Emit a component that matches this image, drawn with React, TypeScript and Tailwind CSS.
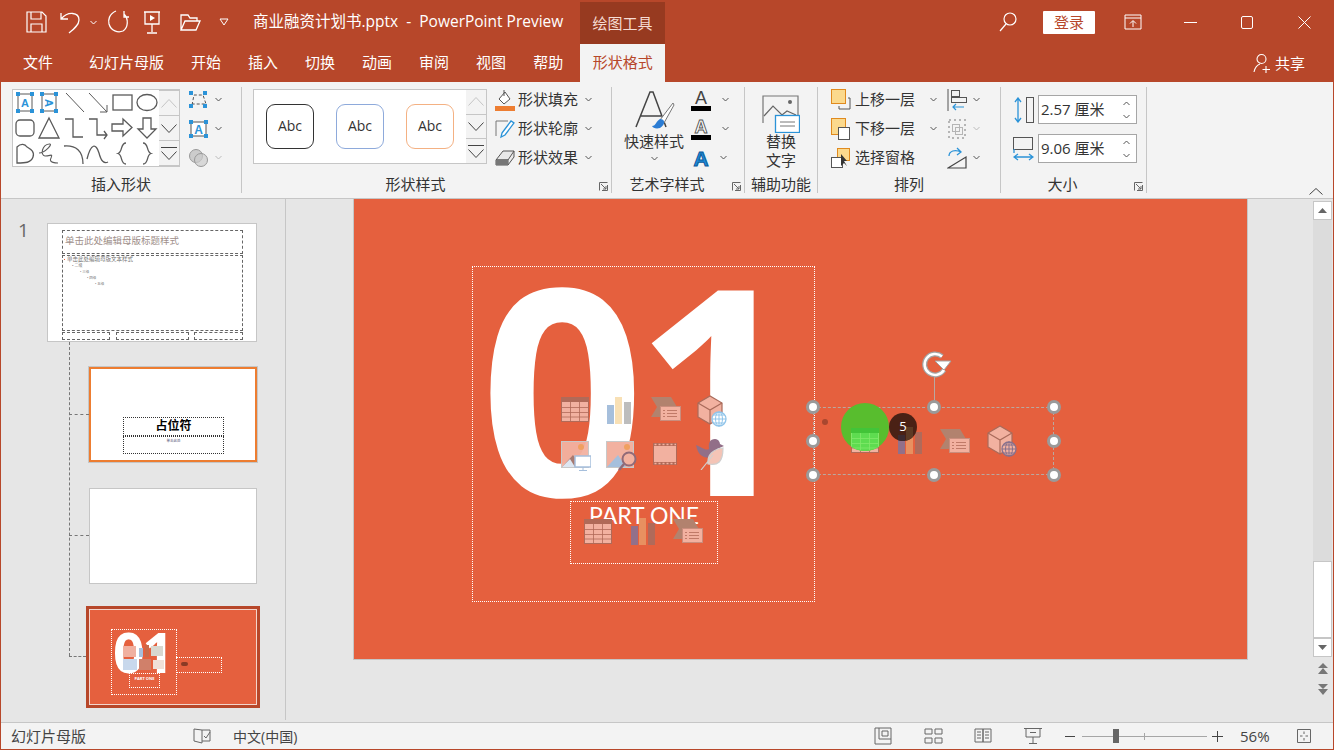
import React from "react";

const CJK = '"Open Sans","Noto Sans CJK SC",sans-serif';
const G = "#5a5a5a";
const B = "#2b93d8";

function Chev({ c = "#555", className = "" }: { c?: string; className?: string }) {
  return (
    <svg width="7" height="5" viewBox="0 0 7 5" className={className}>
      <path d="M.5 1 3.5 4 6.5 1" fill="none" stroke={c} strokeWidth="1" />
    </svg>
  );
}

function Launcher() {
  return (
    <svg width="9" height="9" viewBox="0 0 9 9" className="absolute right-[3px] bottom-[2px]">
      <path d="M.5 8.5V.5H8.5M8.5 3V8.5H3M2 2 7 7M4 7H7V4" fill="none" stroke="#666" strokeWidth="1" />
    </svg>
  );
}

function Group({ w, label, labelCls = "", launcher = false, children }: { w: string; label: string; labelCls?: string; launcher?: boolean; children: React.ReactNode }) {
  return (
    <div className={`relative flex h-[106px] shrink-0 flex-col border-r border-[#c6c6c6] ${w}`}>
      <div className="flex h-[84px] min-h-0">{children}</div>
      <div className={`mt-[8px] text-center text-[15px] leading-[18px] whitespace-nowrap text-[#333] ${labelCls}`}>{label}</div>
      {launcher && <Launcher />}
    </div>
  );
}

function Scroller() {
  const cls = "flex flex-1 items-center justify-center border-[#c6c6c6]";
  return (
    <div className="flex h-full w-[21px] flex-col border border-l-0 border-[#c6c6c6] bg-[#f3f3f3]">
      <div className={cls}>
        <svg width="16" height="9" viewBox="0 0 16 9"><path d="M.5 8.5 8 .5 15.500 8.500" fill="none" stroke="#c4c4c4" /></svg>
      </div>
      <div className={`${cls} border-t`}>
        <svg width="16" height="9" viewBox="0 0 16 9"><path d="M.5.5 8 8.500 15.500.5" fill="none" stroke="#444" /></svg>
      </div>
      <div className={`${cls} flex-col gap-[3px] border-t`}>
        <div className="h-[1px] w-[16px] bg-[#444]" />
        <svg width="16" height="9" viewBox="0 0 16 9"><path d="M.5.5 8 8.500 15.500.5" fill="none" stroke="#444" /></svg>
      </div>
    </div>
  );
}

const shapePaths: React.ReactNode[] = [
  <g key="a"><rect x="5" y="4" width="14" height="17" fill="none" stroke={G} /><text x="12" y="17" fontSize="11" fontWeight="700" textAnchor="middle" fill={B} fontFamily="Liberation Sans">A</text><path d="M3 2h4v4H3zM17 2h4v4h-4zM3 19h4v4H3zM17 19h4v4h-4z" fill={B} /></g>,
  <g key="b"><rect x="5" y="4" width="14" height="17" fill="none" stroke={G} /><text x="12" y="17" fontSize="11" fontWeight="700" textAnchor="middle" fill={B} fontFamily="Liberation Sans" transform="rotate(90 12 13)">A</text><path d="M3 2h4v4H3zM17 2h4v4h-4zM3 19h4v4H3zM17 19h4v4h-4z" fill={B} /></g>,
  <path key="c" d="M4 3 22 22" stroke={G} fill="none" />,
  <path key="d" d="M3 3 21 22M21 15v7h-7" stroke={G} fill="none" />,
  <rect key="e" x="3" y="5" width="19" height="15" fill="none" stroke={G} strokeWidth="1.300" />,
  <ellipse key="f" cx="12" cy="12.500" rx="10" ry="8" fill="none" stroke={G} strokeWidth="1.300" />,
  <rect key="g" x="3" y="5" width="18" height="16" rx="4" fill="none" stroke={G} strokeWidth="1.300" />,
  <path key="h" d="M12 3 22 23H2Z" fill="none" stroke={G} strokeWidth="1.300" />,
  <path key="i" d="M3 4H11V22H21" fill="none" stroke={G} strokeWidth="1.300" />,
  <path key="j" d="M3 4H11V20H21M18 16l3 4-3 4" fill="none" stroke={G} strokeWidth="1.300" />,
  <path key="k" d="M2 9H13V4L22 12.500 13 21V16H2Z" fill="none" stroke={G} strokeWidth="1.300" />,
  <path key="l" d="M8 3H16V14H21L12 23 3 14H8Z" fill="none" stroke={G} strokeWidth="1.300" />,
  <path key="m" d="M4 6C8 2 12 3 14 6 17 8 22 10 20 16 18 22 12 22 4 22Z" fill="none" stroke={G} strokeWidth="1.300" />,
  <path key="n" d="M2 12C8 12 17 2 12 3 5 4 3 14 8 15 14 15 16 12 14 17 11 22 20 22 21 22" fill="none" stroke={G} strokeWidth="1.100" />,
  <path key="o" d="M2 5C14 4 21 10 21 23" fill="none" stroke={G} strokeWidth="1.300" />,
  <path key="p" d="M1 18C5 2 10 2 13 12 15 20 18 23 22 21" fill="none" stroke={G} strokeWidth="1.300" />,
  <path key="q" d="M16 2C10 2 13 11 8 12.500 13 14 10 23 16 23" fill="none" stroke={G} strokeWidth="1.300" />,
  <path key="r" d="M8 2C14 2 11 11 16 12.500 11 14 14 23 8 23" fill="none" stroke={G} strokeWidth="1.300" />,
];

function ShapeGallery() {
  return (
    <div className="ml-[11px] mt-[2px] flex h-[78px] w-[168px] border border-[#c6c6c6] border-r-0 bg-white">
      <div className="grid w-[147px] grid-cols-6 grid-rows-3">
        {shapePaths.map((p, i) => (
          <svg key={i} width="24" height="25" viewBox="0 0 24 25">{p}</svg>
        ))}
      </div>
      <Scroller />
    </div>
  );
}

function Abc({ c }: { c: string }) {
  return (
    <div className={`flex h-[45px] w-[48px] items-center justify-center rounded-[9px] border bg-white pb-[2px] text-[14px] text-[#333] ${c}`}>Abc</div>
  );
}

function LA({ letter = false, outline = false }: { letter?: boolean; outline?: boolean }) {
  return (
    <svg width="22" height="24" viewBox="0 0 22 24">
      {outline ? (
        <text x="11" y="16" fontSize="18" textAnchor="middle" fill="#fff" stroke="#555" strokeWidth=".9" fontFamily="Liberation Sans" fontWeight="700">A</text>
      ) : letter ? (
        <text x="11" y="20" fontSize="21" textAnchor="middle" fill="#1f8bd6" stroke="#0a5a9c" strokeWidth="1" fontFamily="Liberation Sans" fontWeight="700">A</text>
      ) : (
        <text x="11" y="16" fontSize="18" textAnchor="middle" fill="#444" fontFamily="Liberation Sans">A</text>
      )}
      {!letter && <rect x="1" y="18" width="20" height="5" fill="#000" />}
    </svg>
  );
}

function Thumb1() {
  return (
    <div className="relative ml-[46px] h-[119px] w-[210px] border border-[#c6c6c6] bg-white">
      <div className="absolute left-[14px] top-[6px] h-[24px] w-[181px] border border-dashed border-[#666] pl-[2px] text-[9.500px] leading-[20px] whitespace-nowrap text-[#a08f8a]">单击此处编辑母版标题样式</div>
      <div className="absolute left-[14px] top-[31px] h-[76px] w-[181px] border border-dashed border-[#666] text-[#777]">
        <div className="ml-[1px] flex h-[6px] items-center gap-[2px] text-[5.500px] leading-[6px] whitespace-nowrap"><span className="h-[1px] w-[1px] bg-[#e5603e]" />单击此处编辑母版文本样式</div>
        <div className="ml-[9px] mt-[1px] text-[4px] leading-[6px]">• 二级</div>
        <div className="ml-[17px] text-[3.500px] leading-[6px]">• 三级</div>
        <div className="ml-[24px] text-[3.500px] leading-[6px]">• 四级</div>
        <div className="ml-[32px] text-[3.500px] leading-[6px]">• 五级</div>
      </div>
      <div className="absolute left-[14px] top-[108px] h-[8px] w-[48px] border border-dashed border-[#666]" />
      <div className="absolute left-[68px] top-[108px] h-[8px] w-[73px] border border-dashed border-[#666]" />
      <div className="absolute left-[146px] top-[108px] h-[8px] w-[49px] border border-dashed border-[#666]" />
    </div>
  );
}

function Thumb2() {
  return (
    <div className="relative ml-[88px] mt-[25px] h-[95px] w-[168px] border-2 border-[#ed7d31] bg-white outline outline-1 outline-[#c6c6c6]">
      <div className="absolute left-[32px] top-[48px] h-[19px] w-[101px] border border-dotted border-[#333] text-center text-[12px] font-bold leading-[15px] text-black">占位符</div>
      <div className="absolute left-[32px] top-[67px] h-[18px] w-[101px] border border-dotted border-[#333] text-center text-[3.500px] leading-[8px] text-[#557]">单击此处</div>
    </div>
  );
}

function Thumb4() {
  return (
    <div className="relative ml-[85px] mt-[22px] h-[102px] w-[174px] border-[3px] border-[#b7472a] bg-[#e5603e] outline outline-1 -outline-offset-[4px] outline-[#f3d5cc]">
      <div className="absolute left-[22px] top-[20px] h-[66px] w-[66px] border border-dotted border-white" />
      <div className="absolute left-[24px] top-[23px] text-[55px] font-bold leading-[40px] tracking-[-2px] text-white" style={{ fontFamily: "Open Sans" }}>01</div>
      <svg className="absolute left-[32px] top-[36px]" width="44" height="26" viewBox="0 0 44 26">
        <rect x="2" y="1" width="13" height="11" fill="#f0b0a0" /><rect x="18" y="3" width="4" height="9" fill="#a6bfdc" /><rect x="24" y="0" width="4" height="12" fill="#c96a4a" />
        <rect x="30" y="1" width="12" height="10" fill="#d8d8d0" /><rect x="2" y="14" width="14" height="11" fill="#c8d8ec" /><rect x="18" y="14" width="12" height="11" fill="#d0806a" /><rect x="32" y="15" width="11" height="9" fill="#f0e0d8" />
      </svg>
      <div className="absolute left-[40px] top-[64px] h-[15px] w-[31px] border border-dotted border-white text-center text-[4px] font-bold leading-[10px] text-white">PART ONE</div>
      <div className="absolute left-[87px] top-[48px] h-[16px] w-[46px] border border-dotted border-white" />
      <div className="absolute left-[92px] top-[53px] h-[4px] w-[7px] rounded-full bg-[#8a3a25]" />
    </div>
  );
}

function Table({ s = "#b06a58", f = "#f2b1a0", h = "#b06a58" }: { s?: string; f?: string; h?: string }) {
  return (
    <svg width="28" height="25" viewBox="0 0 28 25">
      <rect x=".5" y=".5" width="27" height="24" fill={f} stroke={s} />
      <rect x="0" y="0" width="28" height="5" fill={h} />
      <path d="M9.500 5V24M18.500 5V24M1 10.500H27M1 15.500H27M1 20H27" stroke={s} fill="none" strokeWidth=".8" />
    </svg>
  );
}

function Bars({ a = "#a6bfdc", b = "#f8e0b5", c = "#bdbdbd" }: { a?: string; b?: string; c?: string }) {
  return (
    <svg width="24" height="27" viewBox="0 0 24 27">
      <rect x="0" y="8" width="7" height="19" fill={a} />
      <rect x="8" y="0" width="7" height="27" fill={b} />
      <rect x="17" y="5" width="7" height="22" fill={c} />
    </svg>
  );
}

function Tag() {
  return (
    <svg width="30" height="26" viewBox="0 0 30 26">
      <path d="M0 2H20L26 12H20V22H0L6 12Z" fill="#b2826e" />
      <rect x="9.500" y="11.500" width="20" height="14" fill="#f2b1a0" stroke="#c98d7d" />
      <path d="M12 15.500h2M16 15.500h10M12 18.500h2M16 18.500h10M12 21.500h2M16 21.500h10" stroke="#c07a68" />
    </svg>
  );
}

function Cube({ g = "#8fc4ea", f = "#fff" }: { g?: string; f?: string }) {
  return (
    <svg width="30" height="32" viewBox="0 0 30 32">
      <path d="M1 8 13 1 25 8V22L13 29 1 22Z" fill="#f2b1a0" stroke="#a96a5a" strokeWidth="1.200" />
      <path d="M1 8 13 15 25 8M13 15V29" fill="none" stroke="#a96a5a" strokeWidth="1.200" />
      <circle cx="22" cy="24" r="7" fill={f} stroke={g} strokeWidth="1.300" />
      <path d="M15 24H29M22 17V31M17 20H27M17 28H27" stroke={g} fill="none" />
      <ellipse cx="22" cy="24" rx="3.500" ry="7" stroke={g} fill="none" />
    </svg>
  );
}

function PicMon() {
  return (
    <svg width="30" height="30" viewBox="0 0 30 30">
      <rect x=".5" y=".5" width="27" height="26" fill="#f2b1a0" fillOpacity=".95" stroke="#c8c8c8" />
      <path d="M1 26 12 14 20 26Z" fill="#a87a70" />
      <path d="M1 26 9 18 14 26Z" fill="#dde6f1" />
      <circle cx="20" cy="6" r="3" fill="#f0a060" />
      <rect x="14" y="15" width="16" height="11" fill="#fff" stroke="#a6bfdc" strokeWidth="1.500" />
      <path d="M22 26V29M18 29.500H26" stroke="#a6bfdc" />
    </svg>
  );
}

function PicMag() {
  return (
    <svg width="31" height="31" viewBox="0 0 31 31">
      <rect x=".5" y=".5" width="27" height="26" fill="#f2b1a0" stroke="#c8c8c8" />
      <path d="M1 26 12 14 20 26Z" fill="#a6bfdc" />
      <circle cx="21" cy="6" r="3" fill="#f0a060" />
      <circle cx="23" cy="18" r="6.500" fill="#f2b1a0" stroke="#906a78" strokeWidth="2" />
      <path d="M18 23 13 29" stroke="#906a78" strokeWidth="2.500" />
    </svg>
  );
}

function Film() {
  return (
    <svg width="24" height="22" viewBox="0 0 24 22">
      <rect x="0" y="0" width="24" height="22" fill="#b06a58" />
      <rect x="1" y="3" width="22" height="16" fill="#f2b1a0" />
      <path d="M1.500 1.500H23M1.500 20.500H23" stroke="#f2b1a0" strokeWidth="1.500" strokeDasharray="2 2" />
    </svg>
  );
}

function Bird() {
  return (
    <svg width="29" height="33" viewBox="0 0 29 33">
      <path d="M0 8C6 10 9 14 13 12 12 6 14 2 19 2 23 2 24 6 24 7L28 9 21 12C20 20 14 22 8 20 3 18 1 13 0 8Z" fill="#926f88" />
      <path d="M27 11C27 25 22 29 12 27 11 18 17 12 27 11ZM5 33 17 18" fill="#f4c4b6" stroke="#cfcfcf" strokeWidth="1.200" />
    </svg>
  );
}

function Handle({ cls }: { cls: string }) {
  return <div className={`absolute h-[14px] w-[14px] rounded-full border-[3px] border-[#9a9a9a] bg-white ${cls}`} />;
}

function Slide() {
  return (
    <div className="relative h-[460px] w-[893px] overflow-hidden bg-[#e5603e] outline outline-1 outline-[#c6c6c6]" style={{ fontFamily: CJK }}>
      <div className="absolute left-[118px] top-[67px] h-[336px] w-[343px] border border-dotted border-white" />
      <div className="absolute left-[126px] top-[80px] text-[288px] font-bold leading-[210px] tracking-[-10px] text-white" style={{ fontFamily: "Open Sans" }}>01</div>
      <div className="absolute left-[207px] top-[198px]"><Table /></div>
      <div className="absolute left-[253px] top-[198px]"><Bars /></div>
      <div className="absolute left-[297px] top-[196px]"><Tag /></div>
      <div className="absolute left-[343px] top-[196px]"><Cube /></div>
      <div className="absolute left-[207px] top-[242px]"><PicMon /></div>
      <div className="absolute left-[252px] top-[242px]"><PicMag /></div>
      <div className="absolute left-[299px] top-[244px]"><Film /></div>
      <div className="absolute left-[342px] top-[238px]"><Bird /></div>

      <div className="absolute left-[216px] top-[302px] h-[63px] w-[148px] border border-dotted border-white" />
      <div className="absolute left-[235px] top-[302px] text-[23px] leading-[28px] whitespace-nowrap text-white" style={{ fontFamily: "Lato" }}>PART ONE</div>
      <div className="absolute left-[230px] top-[320px]"><Table /></div>
      <div className="absolute left-[277px] top-[319px]"><Bars a="#92708a" b="#e89060" c="#b06a5a" /></div>
      <div className="absolute left-[319px] top-[318px]"><Tag /></div>

      <div className="absolute left-[459px] top-[208px] h-[68px] w-[241px] border border-dashed border-[#b9a8a0]" />
      <div className="absolute left-[580px] top-[177px] h-[31px] w-[1px] bg-[#b9a8a0]" />
      <svg className="absolute left-[566px] top-[151px]" width="32" height="29" viewBox="0 0 32 29">
        <path d="M24 20A10.500 10.500 0 1 1 22 6.500" fill="none" stroke="#a3a3a3" strokeWidth="5" />
        <path d="M24 20A10.500 10.500 0 1 1 22 6.500" fill="none" stroke="#fff" strokeWidth="2.500" />
        <path d="M15 11H31L24 20Z" fill="#fff" stroke="#a3a3a3" />
      </svg>
      <div className="absolute left-[468px] top-[220px] h-[6px] w-[6px] rounded-full bg-[#a8472f]" />
      <div className="absolute left-[497px] top-[229px]"><Table /></div>
      <div className="absolute left-[544px] top-[228px]"><Bars a="#92708a" b="#e89060" c="#b06a5a" /></div>
      <div className="absolute left-[586px] top-[228px]"><Tag /></div>
      <div className="absolute left-[633px] top-[226px]"><Cube g="#86708c" f="#f2b1a0" /></div>
      <div className="absolute left-[487px] top-[204px] h-[48px] w-[48px] overflow-hidden rounded-full bg-[#58bd2e]">
        <div className="absolute left-[10px] top-[25px]"><Table s="#82e86a" f="#5edc50" h="#42c438" /></div>
      </div>
      <div className="absolute left-[535px] top-[214px] flex h-[28px] w-[28px] items-center justify-center overflow-hidden rounded-full bg-[#4a2115] text-[13px] text-white">
        <div className="absolute left-[9px] top-[14px]"><Bars a="#3c2a30" b="#5c3a24" c="#58301f" /></div>
        <span className="relative">5</span>
      </div>
      <Handle cls="left-[452px] top-[201px]" />
      <Handle cls="left-[573px] top-[201px]" />
      <Handle cls="left-[693px] top-[201px]" />
      <Handle cls="left-[452px] top-[235px]" />
      <Handle cls="left-[693px] top-[235px]" />
      <Handle cls="left-[452px] top-[269px]" />
      <Handle cls="left-[573px] top-[269px]" />
      <Handle cls="left-[693px] top-[269px]" />
    </div>
  );
}

function TitleIcons() {
  const w = "#fff";
  return (
    <div className="flex w-[252px] shrink-0 items-center pl-[25px]">
      <svg width="21" height="22" viewBox="0 0 21 22" fill="none" stroke={w} strokeWidth="1.200"><path d="M1 1H16L20 5V21H1ZM5 1V8H15V1M5 21V13H16V21" /></svg>
      <svg className="ml-[13px]" width="22" height="24" viewBox="0 0 22 24" fill="none" stroke={w} strokeWidth="1.300"><path d="M1 3V9H8M1 9C8 1 19 2 19 10 19 15 14 19 9 23" /></svg>
      <Chev c="#fff" className="ml-[8px]" />
      <svg className="ml-[10px]" width="22" height="24" viewBox="0 0 22 24" fill="none" stroke={w} strokeWidth="1.300"><path d="M9 1C2 4 1 10 2 14 4 21 11 23 16 21 21 18 22 9 17 4M17 1V7H22" /></svg>
      <svg className="ml-[13px]" width="20" height="24" viewBox="0 0 20 24" fill="none" stroke={w} strokeWidth="1.300"><path d="M2 2H18M3 2V14H17V2M10 14V22M5 23H15" /><path d="M8 5V11L13 8Z" fill="#fff" stroke="none" /></svg>
      <svg className="ml-[18px]" width="21" height="18" viewBox="0 0 21 18" fill="none" stroke={w} strokeWidth="1.300"><path d="M1 17V2H8L10 5H17V8M1 17H16L20 8H5Z" /></svg>
      <svg className="ml-[18px]" width="10" height="8" viewBox="0 0 10 8" fill="none" stroke={w}><path d="M1 1H9L5 7Z" /></svg>
    </div>
  );
}

function StatusIcon({ children }: { children: React.ReactNode }) {
  return <svg width="22" height="18" viewBox="0 0 22 18" fill="none" stroke="#666" strokeWidth="1">{children}</svg>;
}

export default function App() {
  const tabs = [
    ["文件", "ml-[22px]"],
    ["幻灯片母版", "ml-[36px]"],
    ["开始", "ml-[27px]"],
    ["插入", "ml-[27px]"],
    ["切换", "ml-[27px]"],
    ["动画", "ml-[27px]"],
    ["审阅", "ml-[27px]"],
    ["视图", "ml-[27px]"],
    ["帮助", "ml-[27px]"],
  ];
  const rowCls = "flex h-[29px] shrink-0 items-center";
  return (
    <div className="flex h-[750px] w-[1334px] flex-col overflow-hidden border-x border-b border-[#b7472a] bg-[#e6e6e6] text-[#333]" style={{ fontFamily: CJK }}>
      {/* title bar */}
      <div className="flex h-[44px] shrink-0 items-center bg-[#b7472a] text-white">
        <TitleIcons />
        <div className="w-[327px] shrink-0 text-[15.500px] whitespace-nowrap">商业融资计划书.pptx&nbsp; -&nbsp; PowerPoint Preview</div>
        <div className="mt-[2px] flex h-[42px] w-[85px] shrink-0 items-center justify-center bg-[#973a20] text-[15px] text-[#f6dcd4]">绘图工具</div>
        <div className="ml-auto flex items-center">
          <svg width="18" height="20" viewBox="0 0 18 20" fill="none" stroke="#fff" strokeWidth="1.200"><circle cx="11" cy="7" r="6" /><path d="M7 12 1 19" /></svg>
          <div className="ml-[26px] flex h-[23px] w-[52px] items-center justify-center rounded-[1px] bg-white text-[15px] text-[#b7472a]">登录</div>
          <svg className="ml-[29px]" width="18" height="16" viewBox="0 0 18 16" fill="none" stroke="#fff"><path d="M1 1H17V15H1ZM1 4H17M9 13V7M6 9.500 9 6.500 12 9.500" /></svg>
          <div className="ml-[42px] h-[1px] w-[13px] bg-white" />
          <div className="ml-[44px] h-[13px] w-[12px] rounded-[2px] border border-white" />
          <svg className="ml-[45px] mr-[22px]" width="13" height="13" viewBox="0 0 13 13" stroke="#fff"><path d="M.5.5 12.500 12.500M12.500.5.5 12.500" /></svg>
        </div>
      </div>
      {/* tabs */}
      <div className="flex h-[38px] shrink-0 items-center bg-[#b7472a] text-[15px] text-white">
        {tabs.map(([t, c]) => (
          <div key={t} className={`${c} pb-[2px]`}>{t}</div>
        ))}
        <div className="ml-[17px] flex h-full w-[85px] items-center justify-center bg-[#f3f3f3] pb-[2px] text-[15px] whitespace-nowrap text-[#b7472a]">形状格式</div>
        <div className="ml-auto mr-[28px] flex items-center gap-[4px] text-[15px]">
          <svg width="18" height="20" viewBox="0 0 18 20" fill="none" stroke="#fff" strokeWidth="1.100"><circle cx="8.500" cy="6" r="4.500" /><path d="M1 19C2 14 4 12 7 11M13 13V20M9.500 16.500H17" /></svg>
          共享
        </div>
      </div>
      {/* ribbon */}
      <div className="relative flex h-[117px] shrink-0 items-start border-b border-[#c6c6c6] bg-[#f3f3f3] pt-[5px]">
        <Group w="w-[241px]" label="插入形状">
          <ShapeGallery />
          <div className="ml-[8px] mt-[-2px] flex flex-col">
            {[0, 1, 2].map((i) => (
              <div key={i} className={`${rowCls} gap-[6px]`}>
                {i === 0 && <svg width="21" height="20" viewBox="0 0 21 20"><path d="M4 15 6 5H15L18 14H4" fill="none" stroke="#555" strokeDasharray="3 2" /><path d="M1 1h4v4H1zM15 1h4v4h-4zM1 14h4v4H1zM15 14h4v4h-4z" fill={B} /></svg>}
                {i === 1 && <svg width="21" height="20" viewBox="0 0 21 20"><rect x="3" y="3" width="15" height="14" fill="#fff" stroke="#555" /><text x="10.500" y="15" fontSize="12" fontWeight="700" fill={B} textAnchor="middle" fontFamily="Liberation Sans">A</text><path d="M1 1h4v4H1zM16 1h4v4h-4zM1 15h4v4H1zM16 15h4v4h-4z" fill={B} /></svg>}
                {i === 2 && <svg width="21" height="20" viewBox="0 0 21 20"><circle cx="8" cy="8" r="6.500" fill="#ccc" stroke="#999" /><circle cx="13" cy="12" r="6.500" fill="#ccc" fillOpacity=".7" stroke="#999" /></svg>}
                <Chev c={i === 2 ? "#bbb" : "#555"} />
              </div>
            ))}
          </div>
        </Group>
        <Group w="w-[370px]" label="形状样式" labelCls="pr-[22px]" launcher>
          <div className="ml-[11px] mt-[2px] flex h-[75px] w-[234px]">
            <div className="flex w-[213px] items-center gap-[22px] border border-r-0 border-[#c6c6c6] bg-white pl-[12px]">
              <Abc c="border-[#333]" />
              <Abc c="border-[#8eaadb]" />
              <Abc c="border-[#f4b183]" />
            </div>
            <Scroller />
          </div>
          <div className="ml-[8px] mt-[-2px] flex flex-col text-[15px] whitespace-nowrap">
            <div className={rowCls}>
              <svg width="20" height="22" viewBox="0 0 20 22"><path d="M4 10 10 3 15 10 9 15Z" fill="#fff" stroke="#555" /><path d="M9 1V7" stroke="#555" /><rect x="0" y="17" width="20" height="5" fill="#ed7d31" /></svg>
              <span className="ml-[3px]">形状填充</span><Chev className="ml-[7px]" />
            </div>
            <div className={rowCls}>
              <svg width="20" height="20" viewBox="0 0 20 20" fill="none"><path d="M1 17V2H13" stroke="#777" /><path d="M7 14 16 2 19 4 10 16 6 18Z" fill="#fff" stroke={B} strokeWidth="1.300" /></svg>
              <span className="ml-[3px]">形状轮廓</span><Chev className="ml-[7px]" />
            </div>
            <div className={rowCls}>
              <svg width="20" height="18" viewBox="0 0 20 18"><path d="M1 11 8 2H19L13 11ZM1 11V16H13V11ZM13 16 19 8V2" fill="#e8e8e8" stroke="#555" /><path d="M1 11H13V16H1Z" fill="#777" /></svg>
              <span className="ml-[3px]">形状效果</span><Chev className="ml-[7px]" />
            </div>
          </div>
        </Group>
        <Group w="w-[133px]" label="艺术字样式" labelCls="pr-[22px]" launcher>
          <div className="ml-[10px] flex w-[64px] flex-col items-center">
            <svg className="mt-[4px]" width="42" height="38" viewBox="0 0 42 38">
              <path d="M3 36 17 1H20L33 36M8 25H28" fill="none" stroke="#444" strokeWidth="1.500" />
              <path d="M40 12 27 29 31 32 41 14Z" fill="#fff" stroke="#777" />
              <path d="M27 28C32 28 33 33 27 37 23 38 20 37 19 35 23 35 23 30 27 28Z" fill="#2b7cd3" />
            </svg>
            <div className="mt-[2px] text-[15px] leading-[20px] whitespace-nowrap">快速样式</div>
            <Chev className="mt-[5px]" />
          </div>
          <div className="ml-[4px] mt-[-2px] flex flex-col">
            <div className={`${rowCls} gap-[10px]`}><LA /><Chev /></div>
            <div className={`${rowCls} gap-[10px]`}><LA outline /><Chev /></div>
            <div className={`${rowCls} gap-[8px]`}><LA letter /><Chev /></div>
          </div>
        </Group>
        <Group w="w-[73px]" label="辅助功能">
          <div className="flex w-full flex-col items-center">
            <svg className="mt-[8px] shrink-0" width="38" height="38" viewBox="0 0 38 38" fill="none">
              <path d="M1 28V1H36V20" stroke="#777" strokeWidth="1.200" />
              <path d="M2 21 11 11 20 20 25 16 34 20" stroke="#666" strokeWidth="1.200" />
              <circle cx="28" cy="7" r="2" fill="#666" />
              <rect x="13.500" y="20.500" width="24" height="17" fill="#fff" stroke={B} strokeWidth="1.300" />
              <path d="M18 27H33M18 31H33" stroke="#777" />
            </svg>
            <div className="mt-[-1px] text-[15px] leading-[19px]">替换</div>
            <div className="text-[15px] leading-[19px]">文字</div>
          </div>
        </Group>
        <Group w="w-[183px]" label="排列">
          <div className="ml-[13px] mt-[-2px] flex w-[108px] flex-col text-[15px]">
            <div className={rowCls}>
              <svg width="20" height="22" viewBox="0 0 20 22"><rect x=".5" y=".5" width="14" height="14" fill="#fbd98d" stroke="#e08a1e" /><path d="M17 9H19V20H8V17" fill="none" stroke="#555" /></svg>
              <span className="ml-[4px] whitespace-nowrap">上移一层</span><Chev className="ml-[15px]" />
            </div>
            <div className={rowCls}>
              <svg width="20" height="22" viewBox="0 0 20 22"><rect x=".5" y=".5" width="14" height="16" fill="#fbd98d" stroke="#e08a1e" /><rect x="7.500" y="9.500" width="11" height="12" fill="#fff" stroke="#555" /></svg>
              <span className="ml-[4px] whitespace-nowrap">下移一层</span><Chev className="ml-[15px]" />
            </div>
            <div className={rowCls}>
              <svg width="20" height="20" viewBox="0 0 20 20"><rect x="6.500" y=".5" width="12" height="12" fill="#fbd98d" stroke="#e08a1e" /><rect x=".5" y="9.500" width="11" height="10" fill="#fff" stroke="#555" /><path d="M10 6V18L13 15 16 18 13 13H16Z" fill="#333" /></svg>
              <span className="ml-[4px] whitespace-nowrap">选择窗格</span>
            </div>
          </div>
          <div className="ml-[8px] mt-[-2px] flex flex-col">
            <div className={`${rowCls} gap-[6px]`}>
              <svg width="20" height="22" viewBox="0 0 20 22" fill="none"><path d="M1 0V22" stroke="#555" /><rect x="4.500" y="1.500" width="8" height="6" stroke="#555" /><rect x="4.500" y="8.500" width="15" height="5" stroke="#555" /><path d="M17 18H6M9 15 6 18 9 21" stroke={B} strokeWidth="1.200" /></svg>
              <Chev />
            </div>
            <div className={`${rowCls} gap-[6px]`}>
              <svg width="20" height="22" viewBox="0 0 20 22" fill="none" stroke="#b5b5b5"><rect x="2" y="2" width="16" height="18" strokeDasharray="2 3" strokeWidth="2" /><rect x="5.500" y="6.500" width="7" height="7" /><rect x="8.500" y="9.500" width="7" height="7" /></svg>
              <Chev c="#bbb" />
            </div>
            <div className={`${rowCls} gap-[6px]`}>
              <svg width="20" height="22" viewBox="0 0 20 22" fill="none"><path d="M1 21 19 10V21Z" stroke="#444" strokeWidth="1.200" /><path d="M2 9C2 4 8 2 14 5M10 1 14 5 10 8" stroke={B} strokeWidth="1.300" /></svg>
              <Chev />
            </div>
          </div>
        </Group>
        <Group w="w-[146px]" label="大小" labelCls="pr-[22px]" launcher>
          <div className="ml-[12px] mt-[8px] flex flex-col gap-[10px]">
            <div className="flex items-center gap-[4px]">
              <svg width="21" height="26" viewBox="0 0 21 26" fill="none"><rect x="13.500" y=".5" width="7" height="25" stroke="#555" /><path d="M5 2V24M2 5 5 1 8 5M2 21 5 25 8 21" stroke={B} strokeWidth="1.300" /></svg>
              <div className="flex h-[29px] w-[99px] items-center justify-between border border-[#a6a6a6] bg-white pl-[2px] pr-[6px] text-[15px]">
                <span className="whitespace-nowrap">2.57 厘米</span>
                <span className="flex flex-col gap-[8px]"><Chev className="rotate-180" /><Chev /></span>
              </div>
            </div>
            <div className="flex items-center gap-[4px]">
              <svg width="21" height="24" viewBox="0 0 21 24" fill="none"><rect x=".5" y=".5" width="19" height="12" stroke="#555" /><path d="M1 16V12M2 20H19M5 17 1 20 5 23M16 17 20 20 16 23" stroke={B} strokeWidth="1.300" /></svg>
              <div className="flex h-[29px] w-[99px] items-center justify-between border border-[#a6a6a6] bg-white pl-[2px] pr-[6px] text-[15px]">
                <span className="whitespace-nowrap">9.06 厘米</span>
                <span className="flex flex-col gap-[8px]"><Chev className="rotate-180" /><Chev /></span>
              </div>
            </div>
          </div>
        </Group>
        <svg className="absolute right-[10px] bottom-[3px]" width="14" height="7" viewBox="0 0 14 7"><path d="M.5 6.500 7 .5 13.500 6.500" fill="none" stroke="#444" /></svg>
      </div>
      {/* main */}
      <div className="flex min-h-0 flex-1">
        <div className="relative h-[521px] w-[285px] shrink-0 border-r border-[#c6c6c6] pt-[24px]">
          <div className="absolute left-[17px] top-[19px] text-[19px] leading-[24px] text-[#666]">1</div>
          <Thumb1 />
          <Thumb2 />
          <div className="ml-[88px] mt-[26px] h-[96px] w-[168px] border border-[#c6c6c6] bg-white" />
          <Thumb4 />
          <div className="absolute left-[68px] top-[143px] h-[314px] w-0 border-l border-dashed border-[#777]" />
          <div className="absolute left-[68px] top-[215px] h-0 w-[20px] border-t border-dashed border-[#777]" />
          <div className="absolute left-[68px] top-[336px] h-0 w-[20px] border-t border-dashed border-[#777]" />
          <div className="absolute left-[68px] top-[457px] h-0 w-[17px] border-t border-dashed border-[#777]" />
        </div>
        <div className="flex-1 pl-[68px]">
          <Slide />
        </div>
        <div className="flex w-[20px] shrink-0 flex-col items-start pt-[2px]">
          <div className="flex h-[19px] w-[19px] items-center justify-center border border-[#c6c6c6] bg-white">
            <svg width="9" height="5" viewBox="0 0 9 5"><path d="M0 5 4.500 0 9 5Z" fill="#666" /></svg>
          </div>
          <div className="h-[341px] w-[19px] bg-[#dcdcdc]" />
          <div className="h-[77px] w-[19px] border border-[#c6c6c6] bg-white" />
          <div className="flex h-[19px] w-[19px] items-center justify-center border border-[#c6c6c6] bg-white">
            <svg width="9" height="5" viewBox="0 0 9 5"><path d="M0 0 4.500 5 9 0Z" fill="#666" /></svg>
          </div>
          <svg className="ml-[5px] mt-[6px]" width="10" height="11" viewBox="0 0 10 11"><path d="M0 5 5 0 10 5ZM0 11 5 5 10 11Z" fill="#777" /></svg>
          <svg className="ml-[5px] mt-[10px]" width="10" height="11" viewBox="0 0 10 11"><path d="M0 0 5 5 10 0ZM0 5 5 11 10 5Z" fill="#777" /></svg>
        </div>
      </div>
      {/* status */}
      <div className="flex h-[27px] shrink-0 items-center border-t border-[#c6c6c6] bg-[#f3f3f3] text-[14px] text-[#444]">
        <div className="ml-[10px] w-[182px] text-[15px] whitespace-nowrap">幻灯片母版</div>
        <svg width="18" height="16" viewBox="0 0 18 16" fill="none" stroke="#666"><path d="M9 2V15L1 13V1L9 2H17V13H9M11 8 13 10 17 4" /></svg>
        <div className="ml-[22px] w-[70px] whitespace-nowrap">中文(中国)</div>
        <div className="ml-[569px] flex items-center gap-[28px]">
          <StatusIcon><path d="M3 1H19V17H3ZM7 1V12H19M10 4H16V9H10Z" /></StatusIcon>
          <StatusIcon><path d="M3 2H10V7H3ZM13 2H20V7H13ZM3 11H10V16H3ZM13 11H20V16H13Z" /></StatusIcon>
          <StatusIcon><path d="M3 2H11V15H3ZM11 2H19V15H11ZM5 5H9M5 8H9M5 11H9M13 5H17M13 8H17M13 11H17" /></StatusIcon>
          <StatusIcon><path d="M2 1.500H20M4 2V10H18V2M11 10V16M7 16.500H15M8 5.500H14" /></StatusIcon>
        </div>
        <div className="ml-[21px] h-[1px] w-[10px] bg-[#444]" />
        <div className="relative ml-[7px] h-[1px] w-[125px] bg-[#a6a6a6]">
          <div className="absolute left-[31px] top-[-7px] h-[14px] w-[6px] bg-[#666]" />
          <div className="absolute left-[62px] top-[-3px] h-[7px] w-[1px] bg-[#a6a6a6]" />
        </div>
        <svg className="ml-[5px]" width="11" height="11" viewBox="0 0 11 11" stroke="#444"><path d="M5.500 0V11M0 5.500H11" /></svg>
        <div className="ml-[17px] w-[50px] text-[15px] whitespace-nowrap">56%</div>
        <svg className="ml-[7px]" width="14" height="14" viewBox="0 0 14 14" fill="none" stroke="#666"><path d="M.5.5H13.500V13.500H.5ZM7 2.500V5M7 9V11.500M3 7H5.500M8.500 7H11" /></svg>
      </div>
    </div>
  );
}
